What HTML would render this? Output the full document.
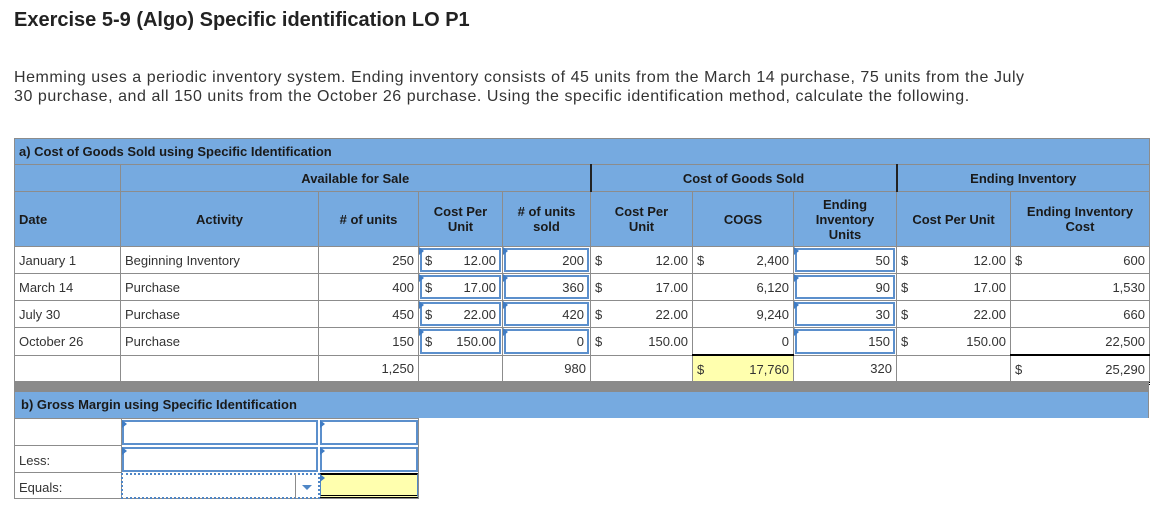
<!DOCTYPE html>
<html><head><meta charset="utf-8"><style>
body{margin:0;width:1171px;height:508px;background:#fff;font-family:"Liberation Sans",Arial,sans-serif;color:#333;position:relative;overflow:hidden}
h1{position:absolute;left:14px;top:9px;margin:0;font-size:20px;font-weight:bold;color:#222}
p{position:absolute;left:14px;top:68px;margin:0;font-size:16px;line-height:19px;color:#333;width:1100px;letter-spacing:0.55px}
table{position:absolute;left:14px;top:138px;border-collapse:collapse;table-layout:fixed;font-size:13px}
td{border:1px solid #8c8c8c;padding:0 4px;height:26px;overflow:hidden;white-space:nowrap;position:relative}
.bl{background:#76aae0;color:#1a1a1a}
.h td.bl{font-weight:bold;text-align:center}
.r{text-align:right}
.inp{position:absolute;left:1px;right:1px;top:1px;bottom:1px;border:2px solid #5b8fcc;box-sizing:border-box;display:flex;justify-content:space-between;align-items:center;padding:0 3px}
.inp.n{justify-content:flex-end}
.tri{position:absolute;left:0;top:0;width:0;height:0;border-top:4px solid transparent;border-bottom:4px solid transparent;border-left:5px solid #3f7cc4}
.ds{display:flex;justify-content:space-between}
.yel{background:#ffffae}
.tot td{border-bottom:3px double #000}
</style></head><body>
<h1>Exercise 5-9 (Algo) Specific identification LO P1</h1>
<p>Hemming uses a periodic inventory system. Ending inventory consists of 45 units from the March 14 purchase, 75 units from the July<br>30 purchase, and all 150 units from the October 26 purchase. Using the specific identification method, calculate the following.</p>
<table>
<colgroup><col style="width:106px"><col style="width:198px"><col style="width:100px"><col style="width:84px"><col style="width:88px"><col style="width:102px"><col style="width:101px"><col style="width:103px"><col style="width:114px"><col style="width:139px"></colgroup>
<tr><td colspan="10" class="bl" style="font-weight:bold;height:25px">a) Cost of Goods Sold using Specific Identification</td></tr>
<tr class="h"><td class="bl"></td><td colspan="4" class="bl">Available for Sale</td><td colspan="3" class="bl" style="border-left:2px solid #222">Cost of Goods Sold</td><td colspan="2" class="bl" style="border-left:2px solid #222">Ending Inventory</td></tr>
<tr class="h" style="height:55px"><td class="bl" style="text-align:left">Date</td><td class="bl">Activity</td><td class="bl"># of units</td><td class="bl" style="line-height:15px">Cost Per<br>Unit</td><td class="bl" style="line-height:15px"># of units<br>sold</td><td class="bl" style="line-height:15px">Cost Per<br>Unit</td><td class="bl">COGS</td><td class="bl" style="line-height:15px">Ending<br>Inventory<br>Units</td><td class="bl">Cost Per Unit</td><td class="bl" style="line-height:15px">Ending Inventory<br>Cost</td></tr>
<tr><td>January 1</td><td>Beginning Inventory</td><td class="r">250</td><td><div class="inp"><span>$</span><span>12.00</span></div><div class="tri"></div></td><td><div class="inp n">200</div><div class="tri"></div></td><td><div class="ds"><span>$</span><span>12.00</span></div></td><td><div class="ds"><span>$</span><span>2,400</span></div></td><td><div class="inp n">50</div><div class="tri"></div></td><td><div class="ds"><span>$</span><span>12.00</span></div></td><td><div class="ds"><span>$</span><span>600</span></div></td></tr>
<tr><td>March 14</td><td>Purchase</td><td class="r">400</td><td><div class="inp"><span>$</span><span>17.00</span></div><div class="tri"></div></td><td><div class="inp n">360</div><div class="tri"></div></td><td><div class="ds"><span>$</span><span>17.00</span></div></td><td class="r">6,120</td><td><div class="inp n">90</div><div class="tri"></div></td><td><div class="ds"><span>$</span><span>17.00</span></div></td><td class="r">1,530</td></tr>
<tr><td>July 30</td><td>Purchase</td><td class="r">450</td><td><div class="inp"><span>$</span><span>22.00</span></div><div class="tri"></div></td><td><div class="inp n">420</div><div class="tri"></div></td><td><div class="ds"><span>$</span><span>22.00</span></div></td><td class="r">9,240</td><td><div class="inp n">30</div><div class="tri"></div></td><td><div class="ds"><span>$</span><span>22.00</span></div></td><td class="r">660</td></tr>
<tr><td>October 26</td><td>Purchase</td><td class="r">150</td><td><div class="inp"><span>$</span><span>150.00</span></div><div class="tri"></div></td><td><div class="inp n">0</div><div class="tri"></div></td><td><div class="ds"><span>$</span><span>150.00</span></div></td><td class="r">0</td><td><div class="inp n">150</div><div class="tri"></div></td><td><div class="ds"><span>$</span><span>150.00</span></div></td><td class="r">22,500</td></tr>
<tr class="tot"><td></td><td></td><td class="r" style="border-top:1px solid #000">1,250</td><td></td><td class="r">980</td><td></td><td class="yel" style="border-top:2px solid #000"><div class="ds"><span>$</span><span>17,760</span></div></td><td class="r">320</td><td></td><td style="border-top:2px solid #000"><div class="ds"><span>$</span><span>25,290</span></div></td></tr>
</table>
<div style="position:absolute;left:14px;top:381px;width:1135px;height:11px;background:#8a8a8a"></div>
<div style="position:absolute;left:14px;top:392px;width:1135px;height:26px;background:#76aae0;font-size:13px;font-weight:bold;color:#1a1a1a;line-height:26px;padding-left:6px;box-sizing:border-box;border-left:1px solid #8c8c8c;border-right:1px solid #8c8c8c">b) Gross Margin using Specific Identification</div>
<div style="position:absolute;left:14px;top:418px;width:405px;height:81px;border:1px solid #8c8c8c;box-sizing:border-box;font-size:13px">
 <div style="position:absolute;left:0;top:26px;width:106px;border-top:1px solid #8c8c8c"></div>
 <div style="position:absolute;left:0;top:53px;width:106px;border-top:1px solid #8c8c8c"></div>
 <div style="position:absolute;left:106px;top:0;height:80px;border-left:1px solid #8c8c8c"></div>
 <div style="position:absolute;left:4px;top:34px">Less:</div>
 <div style="position:absolute;left:4px;top:61px">Equals:</div>
 <div style="position:absolute;left:107px;top:1px;width:196px;height:25px;border:2px solid #5b8fcc;box-sizing:border-box"></div><div class="tri" style="left:107px;top:1px"></div>
 <div style="position:absolute;left:107px;top:28px;width:196px;height:25px;border:2px solid #5b8fcc;box-sizing:border-box"></div><div class="tri" style="left:107px;top:28px"></div>
 <div style="position:absolute;left:106px;top:54px;width:199px;height:26px;border:2px dotted #4f86c6;box-sizing:border-box"></div>
 <div style="position:absolute;left:280px;top:55px;height:24px;border-left:1px solid #8c8c8c"></div>
 <div style="position:absolute;left:287px;top:66px;width:0;height:0;border-left:5px solid transparent;border-right:5px solid transparent;border-top:5px solid #4f86c6"></div>
 <div style="position:absolute;left:305px;top:1px;width:98px;height:25px;border:2px solid #5b8fcc;box-sizing:border-box"></div><div class="tri" style="left:305px;top:1px"></div>
 <div style="position:absolute;left:305px;top:28px;width:98px;height:25px;border:2px solid #5b8fcc;box-sizing:border-box"></div><div class="tri" style="left:305px;top:28px"></div>
 <div style="position:absolute;left:305px;top:54px;width:98px;height:25px;border:1px solid #4f86c6;border-top:2px solid #000;border-bottom:3px double #000;box-sizing:border-box;background:#ffffae"></div><div class="tri" style="left:305px;top:55px"></div>
</div>
</body></html>
